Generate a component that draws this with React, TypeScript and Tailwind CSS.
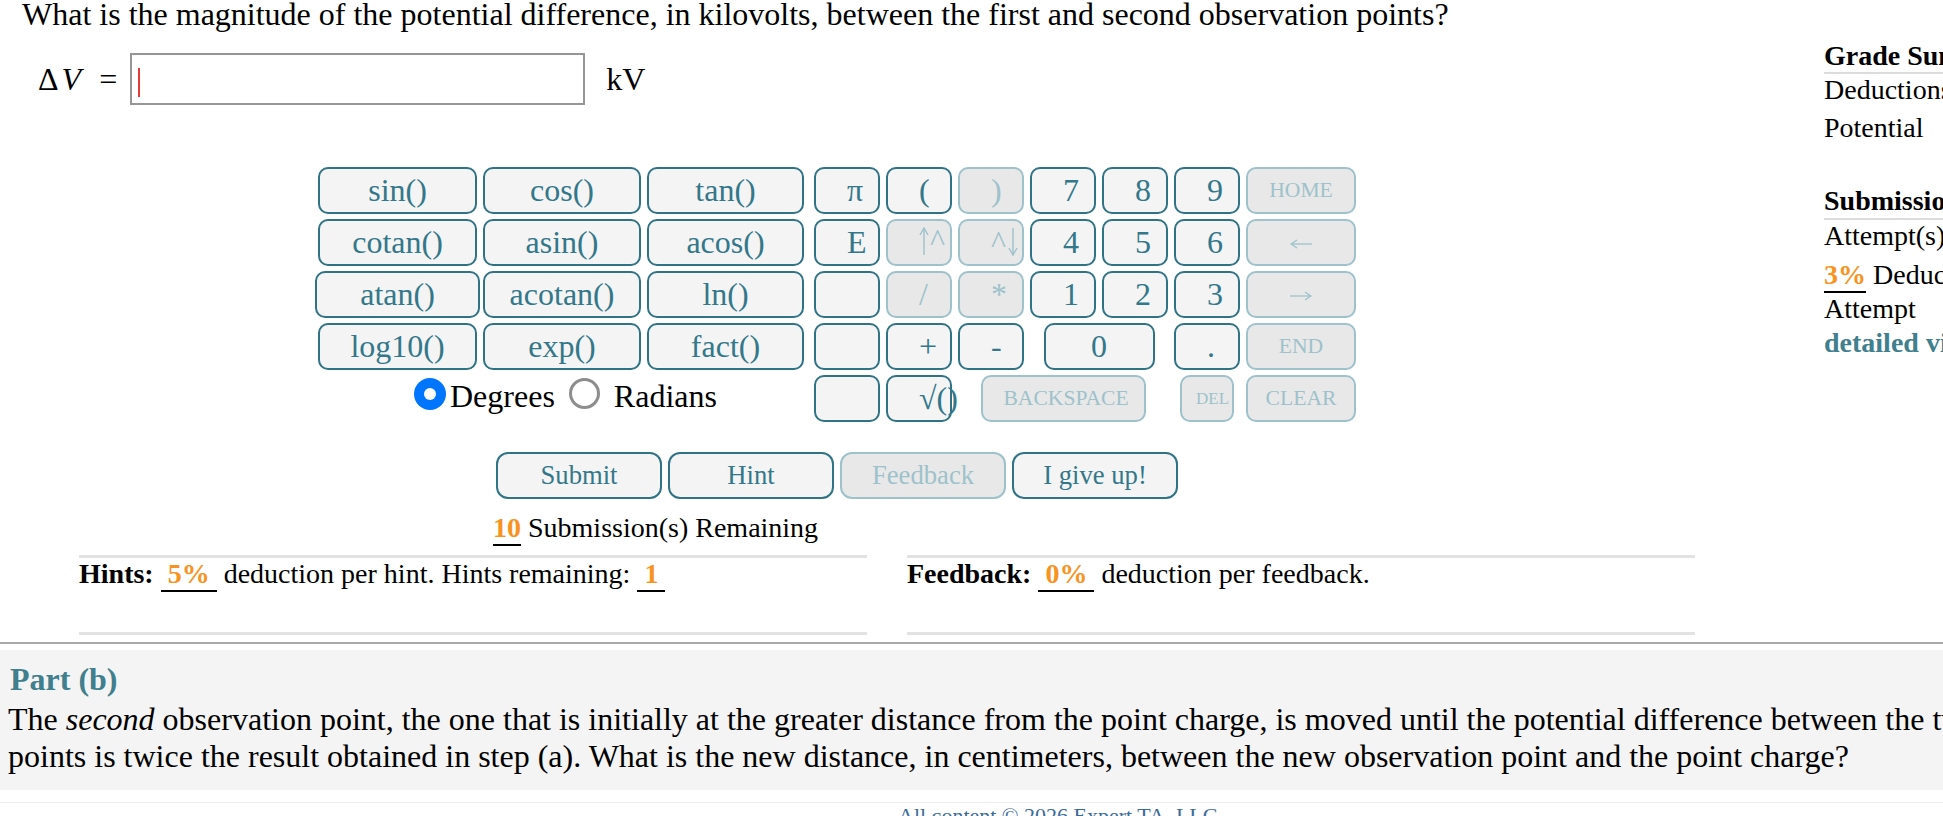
import React from 'react';
import clsx from 'clsx';

const keyOn = 'h-[47px] rounded-[10px] border-2 border-[#2f7385] bg-[#f4f4f4] text-[#33788a] whitespace-nowrap';
const keyOff = 'h-[47px] rounded-[10px] border-2 border-[#9dc2cb] bg-[#e8e8e8] text-[#9dc2cb] whitespace-nowrap';

const small = 'w-[66px] text-left pl-[31px] text-[32px]';
const wide = 'w-[110px] text-[21.6px]';

// thin arrows, the font's own are too stubby
function ArrowV({ down }: { down?: boolean }) {
  return (
    <svg width="10" height="28" viewBox="0 0 10 28" className="inline-block" fill="none" stroke="currentColor" strokeWidth="1.4">
      {down ? (
        <>
          <path d="M5 0v27" />
          <path d="M1 20l4 7 4-7" />
        </>
      ) : (
        <>
          <path d="M5 1v27" />
          <path d="M1 8l4-7 4 7" />
        </>
      )}
    </svg>
  );
}

function ArrowH({ right }: { right?: boolean }) {
  return (
    <svg width="22" height="10" viewBox="0 0 22 10" className="inline-block" fill="none" stroke="currentColor" strokeWidth="1.3">
      {right ? (
        <>
          <path d="M0 5h21" />
          <path d="M15 1l6 4-6 4" />
        </>
      ) : (
        <>
          <path d="M1 5h21" />
          <path d="M7 1L1 5l6 4" />
        </>
      )}
    </svg>
  );
}

interface PadKey {
  label: React.ReactNode;
  off?: boolean;
  className: string;
}

const fnKeys = [
  'sin()', 'cos()', 'tan()',
  'cotan()', 'asin()', 'acos()',
  'atan()', 'acotan()', 'ln()',
  'log10()', 'exp()', 'fact()',
];

const padKeys: PadKey[] = [
  { label: 'π', className: small },
  { label: '(', className: small },
  { label: ')', off: true, className: small },
  { label: '7', className: small },
  { label: '8', className: small },
  { label: '9', className: small },
  { label: 'HOME', off: true, className: wide },

  { label: 'E', className: small },
  {
    label: (
      <span className="inline-flex items-center">
        <ArrowV />
        <span className="ml-[1px]">^</span>
      </span>
    ),
    off: true,
    className: small,
  },
  {
    label: (
      <span className="inline-flex items-center">
        <span>^</span>
        <span className="ml-[2px] flex"><ArrowV down /></span>
      </span>
    ),
    off: true,
    className: small,
  },
  { label: '4', className: small },
  { label: '5', className: small },
  { label: '6', className: small },
  { label: <ArrowH />, off: true, className: wide },

  { label: '', className: small },
  { label: '/', off: true, className: small },
  { label: '*', off: true, className: small },
  { label: '1', className: small },
  { label: '2', className: small },
  { label: '3', className: small },
  { label: <ArrowH right />, off: true, className: wide },

  { label: '', className: small },
  { label: '+', className: small },
  { label: '-', className: small },
  { label: '0', className: 'col-span-2 justify-self-center w-[111px] text-[32px]' },
  { label: '.', className: small },
  { label: 'END', off: true, className: wide },

  { label: '', className: small },
  { label: '√()', className: small },
  { label: 'BACKSPACE', off: true, className: 'col-span-3 justify-self-center w-[165px] pl-[6px] text-[21.6px]' },
  { label: 'DEL', off: true, className: 'justify-self-center w-[54px] text-left pl-[14px] text-[17px]' },
  { label: 'CLEAR', off: true, className: wide },
];

const actions = [
  { label: 'Submit' },
  { label: 'Hint' },
  { label: 'Feedback', off: true },
  { label: 'I give up!' },
];

function Keypad() {
  return (
    <div className="flex ml-[318px] gap-[10px]">
      <div className="grid grid-cols-[159px_158px_157px] auto-rows-[47px] gap-x-[6px] gap-y-[5px] text-[32px]">
        {fnKeys.map((k) => (
          <button
            key={k}
            type="button"
            className={clsx(keyOn, k === 'atan()' ? 'w-[165px] justify-self-center' : 'w-full')}
          >
            {k}
          </button>
        ))}
        <div className="col-span-3 flex items-start pt-[3px] pl-[96px] leading-[37px]">
          <span className="w-[32px] h-[32px] rounded-full bg-[#0075ff] flex items-center justify-center">
            <span className="w-[12px] h-[12px] rounded-full bg-white" />
          </span>
          <span className="ml-[4px]">Degrees</span>
          <span className="ml-[14px] w-[31px] h-[31px] rounded-full border-[3px] border-[#8d8d8d] bg-white" />
          <span className="ml-[14px]">Radians</span>
        </div>
      </div>
      <div className="grid grid-cols-[66px_66px_66px_66px_66px_66px_110px] auto-rows-[47px] gap-x-[6px] gap-y-[5px]">
        {padKeys.map((k, i) => (
          <button key={i} type="button" className={clsx(k.off ? keyOff : keyOn, k.className)}>
            {k.label}
          </button>
        ))}
      </div>
    </div>
  );
}

function Sidebar() {
  return (
    <div className="w-[400px] shrink-0 text-[28px] leading-[32px] whitespace-nowrap">
      <div className="mt-[40px] h-[34px] font-bold border-b-2 border-[#dcdcdc]">Grade Summary</div>
      <div className="h-[32px]">Deductions for Part</div>
      <div className="mt-[6px] h-[32px]">Potential</div>
      <div className="mt-[41px] h-[35px] pb-[1px] font-bold border-b-2 border-[#dcdcdc]">Submissions</div>
      <div className="h-[32px]">Attempt(s) remaining</div>
      <div className="mt-[7px] h-[32px]">
        <span className="inline-block border-b-2 border-black font-bold text-[#f7931e]">3%</span> Deduction per
      </div>
      <div className="mt-[2px] h-[32px]">Attempt</div>
      <div className="mt-[2px] h-[32px] font-bold text-[#3f7f8e]">detailed view</div>
    </div>
  );
}

export default function App() {
  return (
    <div className="w-[1943px] h-[816px] overflow-hidden bg-white text-black font-['Liberation_Serif',serif] leading-[1.15]">
      <div className="flex">
        <div className="w-[1824px] shrink-0">
          <div className="h-[29px] pl-[22px] text-[32px] leading-[29px] whitespace-nowrap">
            What is the magnitude of the potential difference, in kilovolts, between the first and second observation points?
          </div>

          <div className="mt-[24px] h-[52px] flex items-center pl-[38px] text-[32px]">
            <span>Δ</span>
            <i className="ml-[3px]">V</i>
            <span className="ml-[18px]">=</span>
            <div className="ml-[13px] w-[455px] h-[52px] border-2 border-[#969696] bg-white flex items-start pt-[13px]">
              <span className="ml-[6px] w-[2px] h-[29px] bg-[#e5393c]" />
            </div>
            <span className="ml-[21px]">kV</span>
          </div>

          <div className="mt-[62px]">
            <Keypad />
          </div>

          <div className="mt-[30px] ml-[496px] flex gap-[6px]">
            {actions.map((a) => (
              <button
                key={a.label}
                type="button"
                className={clsx(
                  'w-[166px] h-[47px] rounded-[12px] border-2 text-[26.67px]',
                  a.off
                    ? 'border-[#9dc2cb] bg-[#e8e8e8] text-[#9dc2cb]'
                    : 'border-[#2f7385] bg-[#f4f4f4] text-[#33788a]'
                )}
              >
                {a.label}
              </button>
            ))}
          </div>

          <div className="mt-[13px] ml-[493px] h-[32px] text-[28px] leading-[32px] whitespace-nowrap">
            <span className="inline-block border-b-2 border-black font-bold text-[#f7931e]">10</span> Submission(s) Remaining
          </div>

          <div className="mt-[11px] ml-[79px] flex gap-[40px] text-[28px] leading-[32px] whitespace-nowrap">
            <div className="w-[788px] h-[80px] border-y-[3px] border-[#e2e2e2]">
              <b>Hints:</b>{' '}
              <span className="inline-block px-[7px] border-b-2 border-black font-bold text-[#f7931e]">5%</span>{' '}
              deduction per hint. Hints remaining:{' '}
              <span className="inline-block px-[7px] border-b-2 border-black font-bold text-[#f7931e]">1</span>
            </div>
            <div className="w-[788px] h-[80px] border-y-[3px] border-[#e2e2e2]">
              <b>Feedback:</b>{' '}
              <span className="inline-block px-[7px] border-b-2 border-black font-bold text-[#f7931e]">0%</span>{' '}
              deduction per feedback.
            </div>
          </div>
        </div>
        <Sidebar />
      </div>

      <div className="mt-[7px] border-t-2 border-[#ababab]" />

      <div className="mt-[6px] h-[140px] bg-[#f4f4f4] pt-[11px] text-[32px] leading-[37px] whitespace-nowrap">
        <div className="pl-[10px] font-bold text-[#3f7f8e]">Part (b)</div>
        <p className="mt-[3px] pl-[8px]">
          The <i>second</i> observation point, the one that is initially at the greater distance from the point charge, is moved until the potential difference between the two
          <br />
          points is twice the result obtained in step (a). What is the new distance, in centimeters, between the new observation point and the point charge?
        </p>
      </div>

      <div className="mt-[12px] border-t border-[#ececec] pl-[898px] text-[22px] leading-[25px] text-[#3c6b9a] whitespace-nowrap">
        All content © 2026 Expert TA, LLC
      </div>
    </div>
  );
}
